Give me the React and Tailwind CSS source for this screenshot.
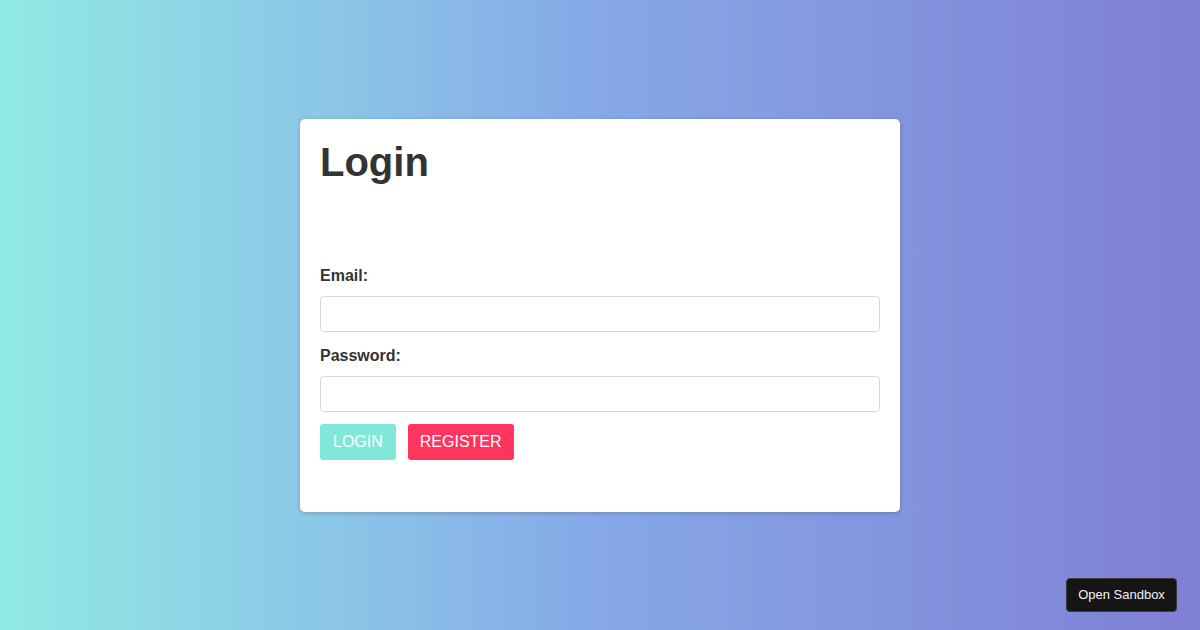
export default function App() {
  return (
    <div
      className="relative flex h-[630px] w-full items-center justify-center bg-linear-to-r from-[#91eae4] via-[#86a8e7] to-[#7f7fd5]"
      style={{ fontFamily: '"Liberation Sans", Arial, sans-serif' }}
    >
      <div className="mt-[1px] flex w-[600px] flex-col rounded-[5px] bg-white px-5 pt-[19px] pb-[52px] shadow-[0_1px_4px_rgba(0,0,0,0.2)]">
        <h1 className="text-[40px] leading-[48px] font-bold text-[#333]">Login</h1>
        <label className="mt-[78px] text-base leading-6 font-bold text-[#333]">Email:</label>
        <input
          type="email"
          className="mt-2 h-9 w-full rounded-[4px] border border-[#d9d9d9] bg-white px-2 outline-none"
        />
        <label className="mt-3 text-base leading-6 font-bold text-[#333]">Password:</label>
        <input
          type="password"
          className="mt-2 h-9 w-full rounded-[4px] border border-[#d9d9d9] bg-white px-2 outline-none"
        />
        <div className="mt-3 flex gap-3">
          <button className="h-9 rounded-[3px] bg-[#80e8da] px-[13px] text-base text-white">LOGIN</button>
          <button className="h-9 rounded-[3px] bg-[#ff3560] px-[12px] text-base text-white">REGISTER</button>
        </div>
      </div>
      <button className="absolute right-[23px] bottom-[18px] h-[34px] w-[111px] rounded-[4px] border border-[#3a3a3a] bg-[#151515] text-[13px] text-[#f2f2f2]">
        Open Sandbox
      </button>
    </div>
  );
}
